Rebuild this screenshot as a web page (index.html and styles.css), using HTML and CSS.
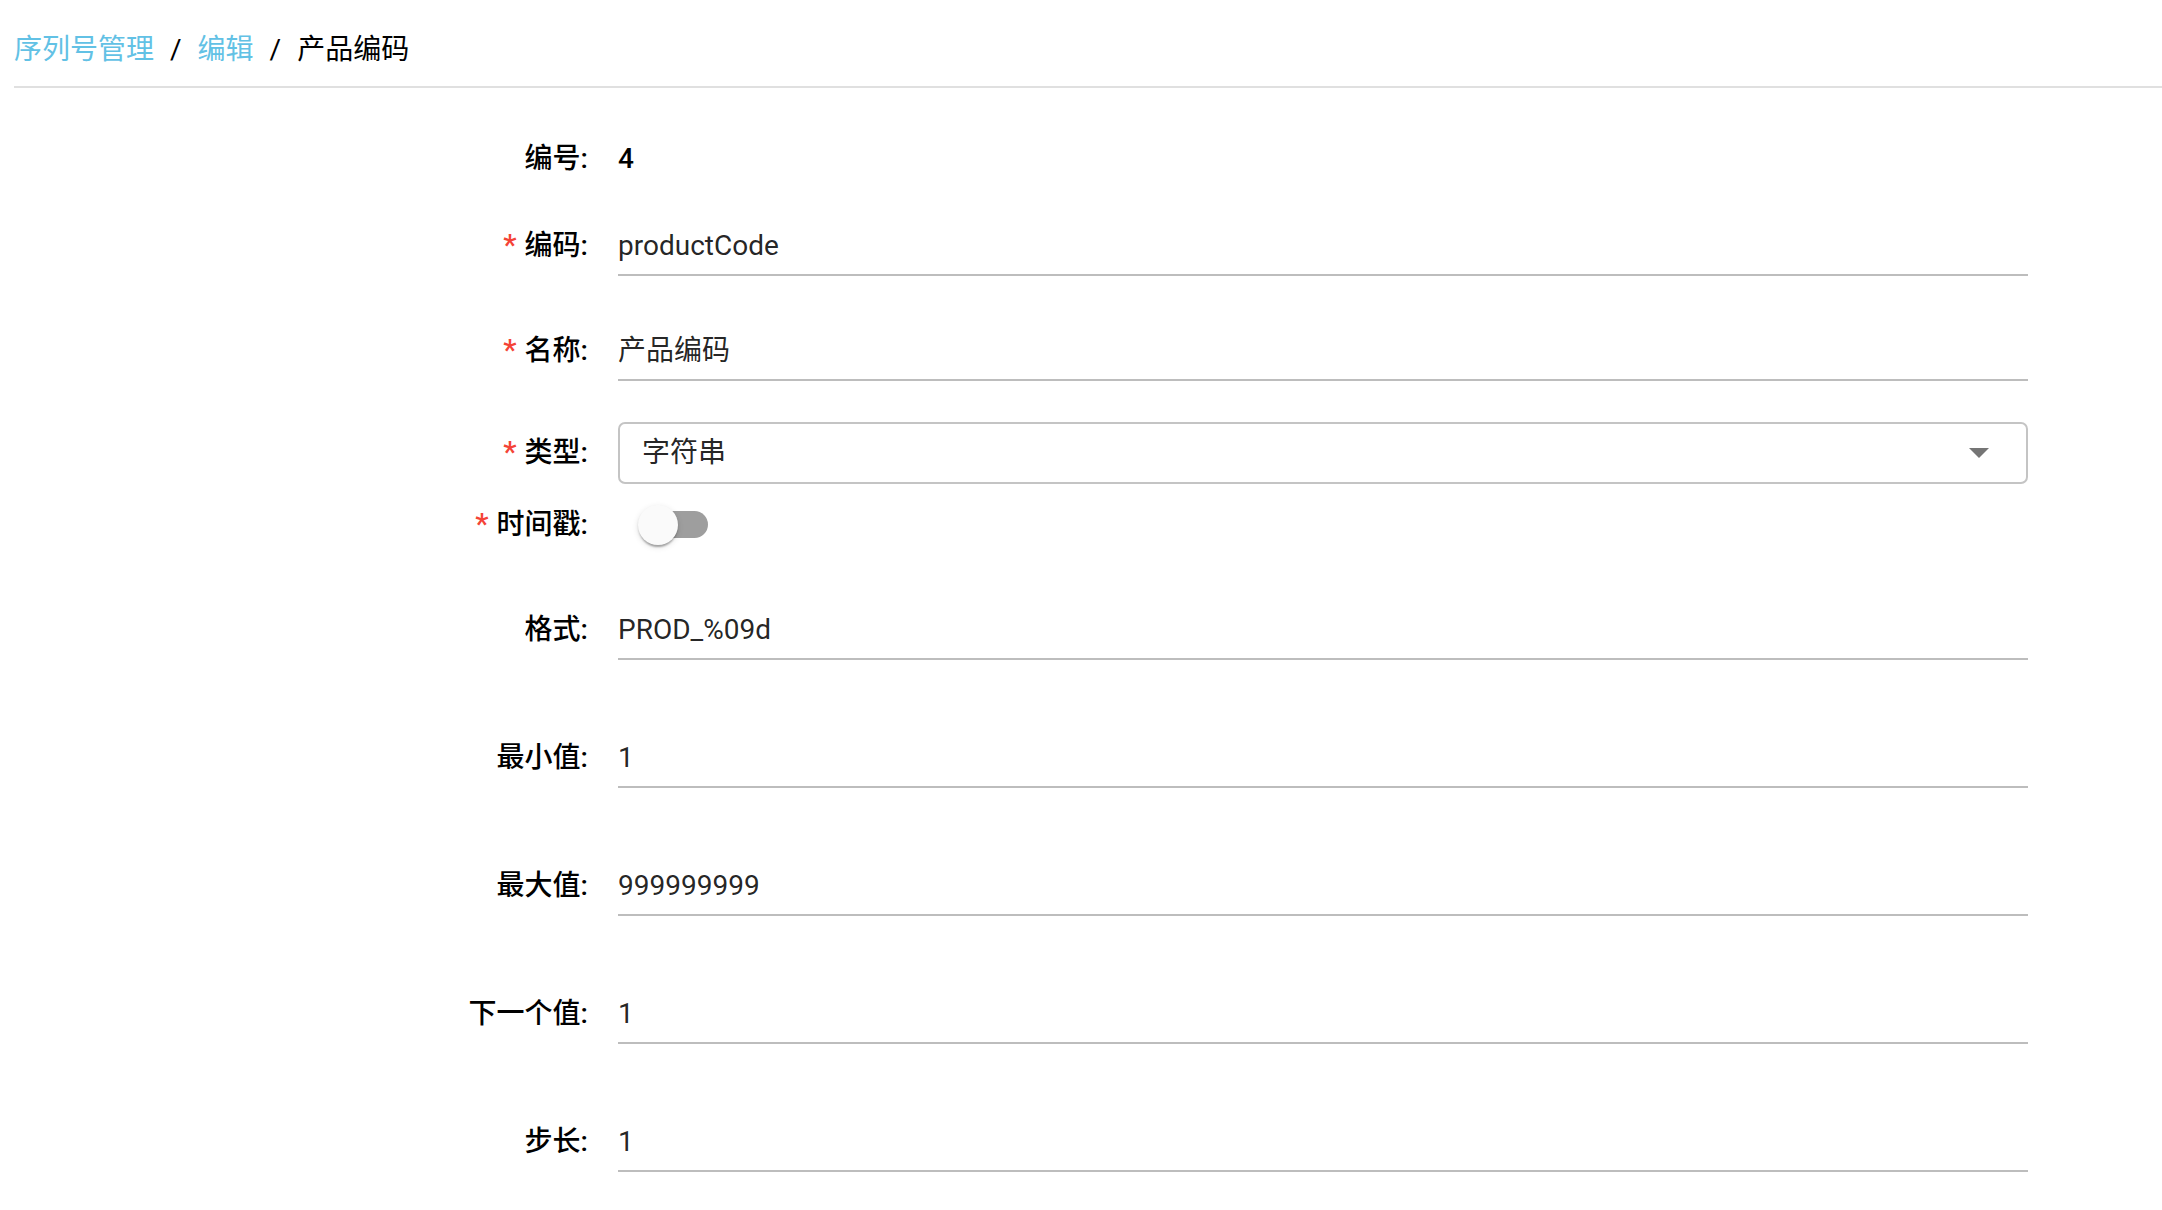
FILE: index.html
```html
<!DOCTYPE html>
<html lang="zh-CN">
<head>
<meta charset="utf-8">
<title>产品编码</title>
<link rel="stylesheet" href="styles.css">
</head>
<body>
<nav class="crumbs">
  <a class="crumb-link" href="#">序列号管理</a>
  <span class="crumb-sep">/</span>
  <a class="crumb-link" href="#">编辑</a>
  <span class="crumb-sep">/</span>
  <span class="crumb-current">产品编码</span>
</nav>
<form class="form">
  <div class="row row-first">
    <label class="label">编号:</label>
    <div class="static">4</div>
  </div>
  <div class="row row-a">
    <label class="label"><span class="req">*</span>编码:</label>
    <div class="field">productCode</div>
  </div>
  <div class="row row-b">
    <label class="label"><span class="req">*</span>名称:</label>
    <div class="field">产品编码</div>
  </div>
  <div class="row row-select">
    <label class="label"><span class="req">*</span>类型:</label>
    <div class="select">
      <span class="select-value">字符串</span>
      <svg class="select-arrow" width="20" height="10" viewBox="0 0 20 10"><path d="M0 0L10 10L20 0Z" fill="#757575"/></svg>
    </div>
  </div>
  <div class="row row-switch">
    <label class="label"><span class="req">*</span>时间戳:</label>
    <div class="switch">
      <span class="switch-track"></span>
      <span class="switch-thumb"></span>
    </div>
  </div>
  <div class="row row-c">
    <label class="label">格式:</label>
    <div class="field">PROD_%09d</div>
  </div>
  <div class="row row-d">
    <label class="label">最小值:</label>
    <div class="field">1</div>
  </div>
  <div class="row row-d">
    <label class="label">最大值:</label>
    <div class="field">999999999</div>
  </div>
  <div class="row row-d">
    <label class="label">下一个值:</label>
    <div class="field">1</div>
  </div>
  <div class="row row-d">
    <label class="label">步长:</label>
    <div class="field">1</div>
  </div>
</form>
</body>
</html>
```

FILE: styles.css
```css
* {
  box-sizing: border-box;
}

html, body {
  margin: 0;
  padding: 0;
  background: #ffffff;
}

body {
  font-family: Roboto, "Noto Sans CJK SC", sans-serif;
  font-size: 28px;
  line-height: 34px;
  color: rgba(0, 0, 0, 0.87);
}

.crumbs {
  margin-left: 14px;
  padding-top: 33px;
  padding-bottom: 19px;
  border-bottom: 2px solid #e0e0e0;
  display: flex;
  align-items: baseline;
}

.crumb-link {
  color: #62c1e5;
  text-decoration: none;
}

.crumb-sep {
  margin: 0 16px;
  color: #000;
}

.crumb-current {
  color: #000;
}

.form {
  padding-top: 54px;
  padding-left: 288px;
}

.row {
  display: flex;
  align-items: baseline;
}

.row-a { margin-top: 51px; }
.row-b { margin-top: 56px; }
.row-select { margin-top: 41px; align-items: center; }
.row-switch { margin-top: 21px; align-items: center; }
.row-c { margin-top: 66px; }
.row-d { margin-top: 79px; }

.label {
  flex: none;
  width: 330px;
  padding-right: 30px;
  text-align: right;
  font-weight: 500;
  color: #000;
}

.req {
  color: #f44336;
  font-family: Roboto, sans-serif;
  font-size: 30px;
  line-height: 20px;
  margin-right: 8px;
}

.static {
  font-weight: 500;
  color: #000;
}

.field {
  width: 1410px;
  padding-top: 2px;
  padding-bottom: 11px;
  border-bottom: 2px solid #bdbdbd;
}

.select {
  width: 1410px;
  border: 2px solid #c4c4c4;
  border-radius: 7px;
  padding: 12px 37px 12px 22px;
  display: flex;
  align-items: center;
  justify-content: space-between;
}

.select-arrow {
  display: block;
}

.switch {
  position: relative;
  width: 70px;
  height: 40px;
  margin-left: 20px;
}

.switch-track {
  position: absolute;
  left: 4px;
  top: 6px;
  width: 66px;
  height: 27px;
  border-radius: 14px;
  background: #9e9e9e;
}

.switch-thumb {
  position: absolute;
  left: 0;
  top: 0;
  width: 40px;
  height: 40px;
  border-radius: 50%;
  background: #fafafa;
  box-shadow: 0 4px 2px -2px rgba(0, 0, 0, 0.2), 0 2px 2px 0 rgba(0, 0, 0, 0.14), 0 2px 6px 0 rgba(0, 0, 0, 0.12);
}
```
